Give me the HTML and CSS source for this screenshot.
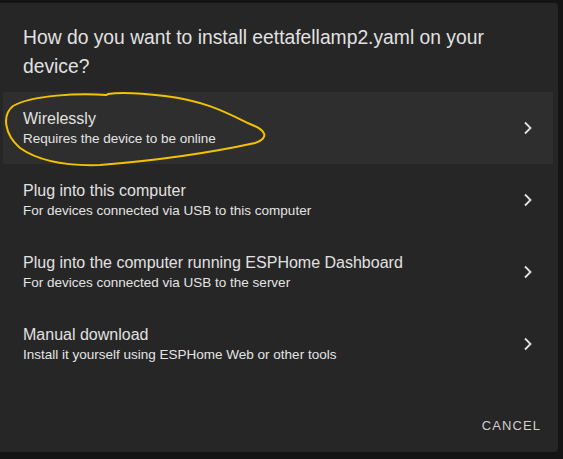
FILE: index.html
```html
<!DOCTYPE html>
<html>
<head>
<meta charset="utf-8">
<link rel="stylesheet" href="styles.css">
</head>
<body>
<div class="dialog">
  <h2 class="heading">How do you want to install eettafellamp2.yaml on your device?</h2>
  <div class="list">
    <div class="item active">
      <div class="texts">
        <div class="title">Wirelessly</div>
        <div class="sub">Requires the device to be online</div>
      </div>
      <svg class="chev" width="10" height="14" viewBox="0 0 10 14"><polyline points="2,1.5 7.5,7 2,12.5" fill="none" stroke="#e2e2e2" stroke-width="1.8"/></svg>
    </div>
    <div class="item">
      <div class="texts">
        <div class="title">Plug into this computer</div>
        <div class="sub">For devices connected via USB to this computer</div>
      </div>
      <svg class="chev" width="10" height="14" viewBox="0 0 10 14"><polyline points="2,1.5 7.5,7 2,12.5" fill="none" stroke="#e2e2e2" stroke-width="1.8"/></svg>
    </div>
    <div class="item">
      <div class="texts">
        <div class="title">Plug into the computer running ESPHome Dashboard</div>
        <div class="sub">For devices connected via USB to the server</div>
      </div>
      <svg class="chev" width="10" height="14" viewBox="0 0 10 14"><polyline points="2,1.5 7.5,7 2,12.5" fill="none" stroke="#e2e2e2" stroke-width="1.8"/></svg>
    </div>
    <div class="item">
      <div class="texts">
        <div class="title">Manual download</div>
        <div class="sub">Install it yourself using ESPHome Web or other tools</div>
      </div>
      <svg class="chev" width="10" height="14" viewBox="0 0 10 14"><polyline points="2,1.5 7.5,7 2,12.5" fill="none" stroke="#e2e2e2" stroke-width="1.8"/></svg>
    </div>
  </div>
  <div class="actions">
    <button class="btn">CANCEL</button>
  </div>
</div>
<svg class="annot" width="563" height="459" viewBox="0 0 563 459">
  <path d="M106 95 C80 93, 32 95, 13 106 C2 115, 4 134, 20 148 C40 162, 70 166, 100 165 C150 161, 200 155, 255 143 C270 138, 266 130, 250 124 C225 112, 205 101, 165 96 C140 93, 120 92, 108 94 Q107 95 106 95" fill="none" stroke="#f2c200" stroke-width="2" stroke-linecap="round" stroke-linejoin="round"/>
</svg>
</body>
</html>
```

FILE: styles.css
```css
html, body {
  margin: 0;
  padding: 0;
  background: #141414;
  width: 563px;
  height: 459px;
  overflow: hidden;
  position: relative;
  font-family: "Liberation Sans", Arial, sans-serif;
  color: #e1e1e1;
}

.dialog {
  margin: 3px 5px 0 0;
  height: 449px;
  background: #262626;
  border-radius: 0 4px 4px 0;
  display: flex;
  flex-direction: column;
  box-sizing: border-box;
}

.heading {
  margin: 0;
  padding: 20px 24px 0 23px;
  font-size: 19.3px;
  line-height: 29px;
  font-weight: normal;
  color: #e1e1e1;
}

.list {
  margin-top: 11px;
  padding: 0 5px 0 3px;
}

.item {
  height: 72px;
  display: flex;
  align-items: center;
  padding: 0 0 0 20px;
}

.item.active {
  background: #2e2e2e;
}

.texts {
  flex: 1;
  display: flex;
  flex-direction: column;
  gap: 1px;
}

.title {
  font-size: 16px;
  line-height: 20px;
  color: #e1e1e1;
}

.sub {
  font-size: 13.5px;
  line-height: 18px;
  color: #e4e4e4;
}

.chev {
  margin-right: 20px;
  display: block;
}

.actions {
  margin-top: auto;
  display: flex;
  justify-content: flex-end;
  padding: 0 9px 8px 0;
}

.btn {
  background: none;
  border: none;
  font-family: "Liberation Sans", Arial, sans-serif;
  font-size: 13px;
  letter-spacing: 1.1px;
  line-height: 36px;
  height: 36px;
  padding: 0 8px;
  color: #cfcfcf;
}

.annot {
  position: absolute;
  top: 0;
  left: 0;
  pointer-events: none;
}
```
